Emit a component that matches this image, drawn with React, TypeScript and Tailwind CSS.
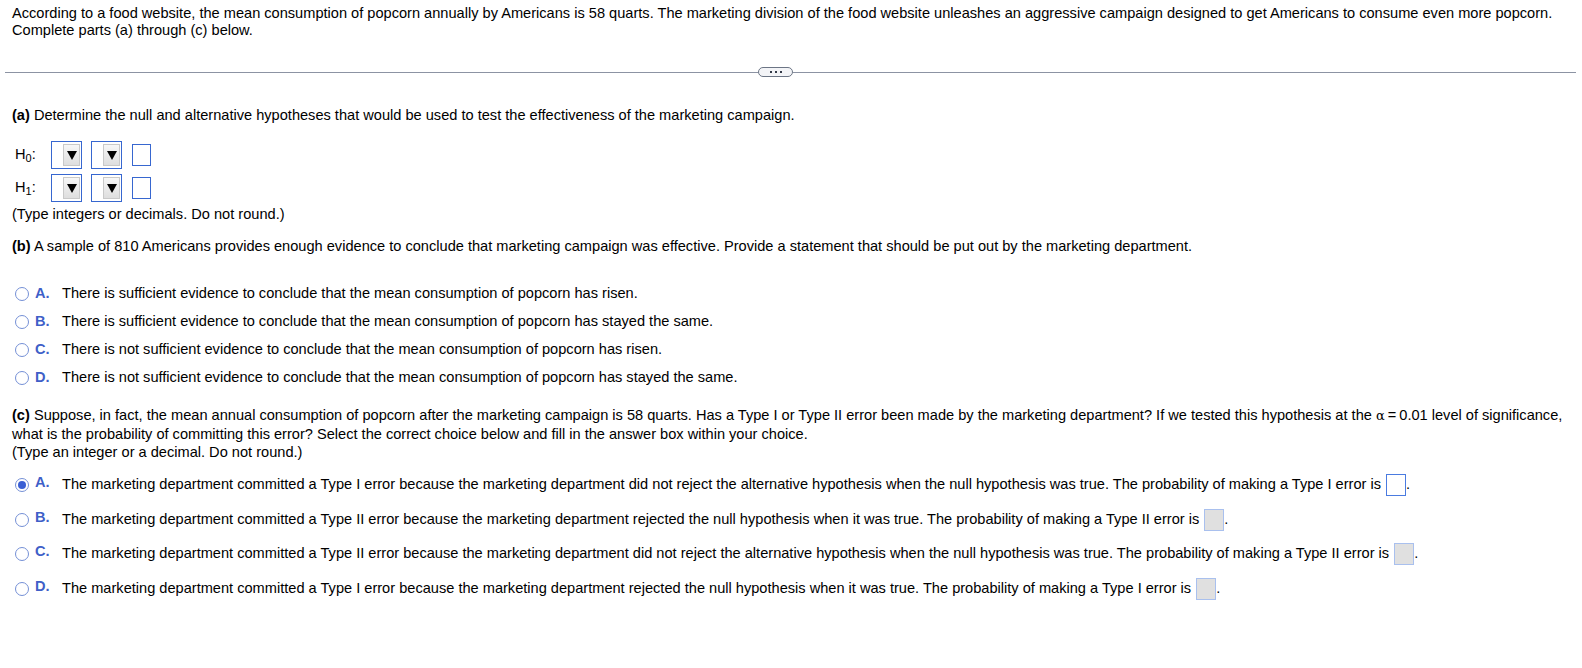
import React from "react";

function Radio({ checked }: { checked?: boolean }) {
  return (
    <div className="w-[14px] h-[14px] rounded-full border border-[#7590d6] bg-white flex items-center justify-center shrink-0">
      {checked ? <div className="w-[8px] h-[8px] rounded-full bg-[#3a5fd4]" /> : null}
    </div>
  );
}

function Select() {
  return (
    <div className="w-[31px] h-[28px] border border-[#3767d0] bg-white flex items-center justify-end pr-[1px]">
      <div className="w-[17px] h-[22px] border border-[#c9c9c9] bg-gradient-to-b from-[#f7f7f7] to-[#dedede] flex items-center justify-center">
        <svg width="10" height="9" viewBox="0 0 10 9">
          <polygon points="0,0 10,0 5,9" fill="#000" />
        </svg>
      </div>
    </div>
  );
}

function HRow({ sub }: { sub: string }) {
  return (
    <div className="flex items-center h-[28px] pl-[15px]">
      <div className="w-[36px] leading-none relative -top-[1px]">
        H<sub className="text-[11px] relative top-[3px]">{sub}</sub>:
      </div>
      <Select />
      <div className="w-[9px]" />
      <Select />
      <div className="w-[10px]" />
      <div className="w-[19px] h-[22px] border border-[#3767d0] bg-white" />
    </div>
  );
}

function OptB({ letter, text }: { letter: string; text: string }) {
  return (
    <div className="flex items-center h-[28px] pl-[15px]">
      <Radio />
      <div className="ml-[6px] w-[27px] font-bold text-[#3f5fc8]">{letter}</div>
      <div>{text}</div>
    </div>
  );
}

function AnsBox({ active }: { active?: boolean }) {
  return active ? (
    <span className="inline-block align-middle w-[20px] h-[22px] border border-[#4a7be0] bg-white ml-[1px]" />
  ) : (
    <span className="inline-block align-middle w-[20px] h-[22px] border border-[#a9c0ee] bg-[#e0e0e0] ml-[1px]" />
  );
}

function OptC({
  letter,
  text,
  checked,
  active,
}: {
  letter: string;
  text: string;
  checked?: boolean;
  active?: boolean;
}) {
  return (
    <div className="flex items-center h-[34.5px] pl-[15px]">
      <Radio checked={checked} />
      <div className="ml-[6px] w-[27px] font-bold text-[#3f5fc8] relative -top-[2px]">{letter}</div>
      <div className="whitespace-nowrap">
        {text} <AnsBox active={active} />.
      </div>
    </div>
  );
}

export default function App() {
  return (
    <div className="w-[1582px] h-[668px] bg-white text-black text-[14.6px] font-['Liberation_Sans',Arial,sans-serif] overflow-hidden">
      <div className="pl-[12px] pt-[5px] leading-[17px]">
        <div className="whitespace-nowrap">
          According to a food website, the mean consumption of popcorn annually by Americans is 58 quarts. The marketing division of the food website unleashes an aggressive campaign designed to get Americans to consume even more popcorn.
        </div>
        <div>Complete parts (a) through (c) below.</div>
      </div>

      <div className="flex items-center mt-[28px] ml-[5px] w-[1571px] h-[10px]">
        <div className="w-[753px] h-px bg-[#8c93a3]" />
        <div className="w-[35px] h-[10px] rounded-full border border-[#6c7585] bg-[#f3f4f7] flex items-center justify-center gap-[3px]">
          <div className="w-[2px] h-[2px] bg-[#333a48]" />
          <div className="w-[2px] h-[2px] bg-[#333a48]" />
          <div className="w-[2px] h-[2px] bg-[#333a48]" />
        </div>
        <div className="flex-1 h-px bg-[#8c93a3]" />
      </div>

      <div className="pl-[12px] mt-[30px] leading-[17px]">
        <b>(a)</b> Determine the null and alternative hypotheses that would be used to test the effectiveness of the marketing campaign.
      </div>

      <div className="mt-[17px]">
        <HRow sub="0" />
      </div>
      <div className="mt-[5px]">
        <HRow sub="1" />
      </div>

      <div className="pl-[12px] mt-[4px] leading-[17px]">(Type integers or decimals. Do not round.)</div>

      <div className="pl-[12px] mt-[15px] leading-[17px]">
        <b>(b)</b> A sample of 810 Americans provides enough evidence to conclude that marketing campaign was effective. Provide a statement that should be put out by the marketing department.
      </div>

      <div className="mt-[25px]">
        <OptB letter="A." text="There is sufficient evidence to conclude that the mean consumption of popcorn has risen." />
        <OptB letter="B." text="There is sufficient evidence to conclude that the mean consumption of popcorn has stayed the same." />
        <OptB letter="C." text="There is not sufficient evidence to conclude that the mean consumption of popcorn has risen." />
        <OptB letter="D." text="There is not sufficient evidence to conclude that the mean consumption of popcorn has stayed the same." />
      </div>

      <div className="pl-[12px] mt-[14px] leading-[18px]">
        <div className="whitespace-nowrap">
          <b>(c)</b> Suppose, in fact, the mean annual consumption of popcorn after the marketing campaign is 58 quarts. Has a Type I or Type II error been made by the marketing department? If we tested this hypothesis at the{" "}
          <span className="font-['DejaVu_Serif',serif] text-[13px]">α</span>
          <span className="mx-[3px]">=</span>0.01 level of significance,
        </div>
        <div>what is the probability of committing this error? Select the correct choice below and fill in the answer box within your choice.</div>
        <div>(Type an integer or a decimal. Do not round.)</div>
      </div>

      <div className="mt-[7px]">
        <OptC
          letter="A."
          checked
          active
          text="The marketing department committed a Type I error because the marketing department did not reject the alternative hypothesis when the null hypothesis was true. The probability of making a Type I error is"
        />
        <OptC
          letter="B."
          text="The marketing department committed a Type II error because the marketing department rejected the null hypothesis when it was true. The probability of making a Type II error is"
        />
        <OptC
          letter="C."
          text="The marketing department committed a Type II error because the marketing department did not reject the alternative hypothesis when the null hypothesis was true. The probability of making a Type II error is"
        />
        <OptC
          letter="D."
          text="The marketing department committed a Type I error because the marketing department rejected the null hypothesis when it was true. The probability of making a Type I error is"
        />
      </div>
    </div>
  );
}
